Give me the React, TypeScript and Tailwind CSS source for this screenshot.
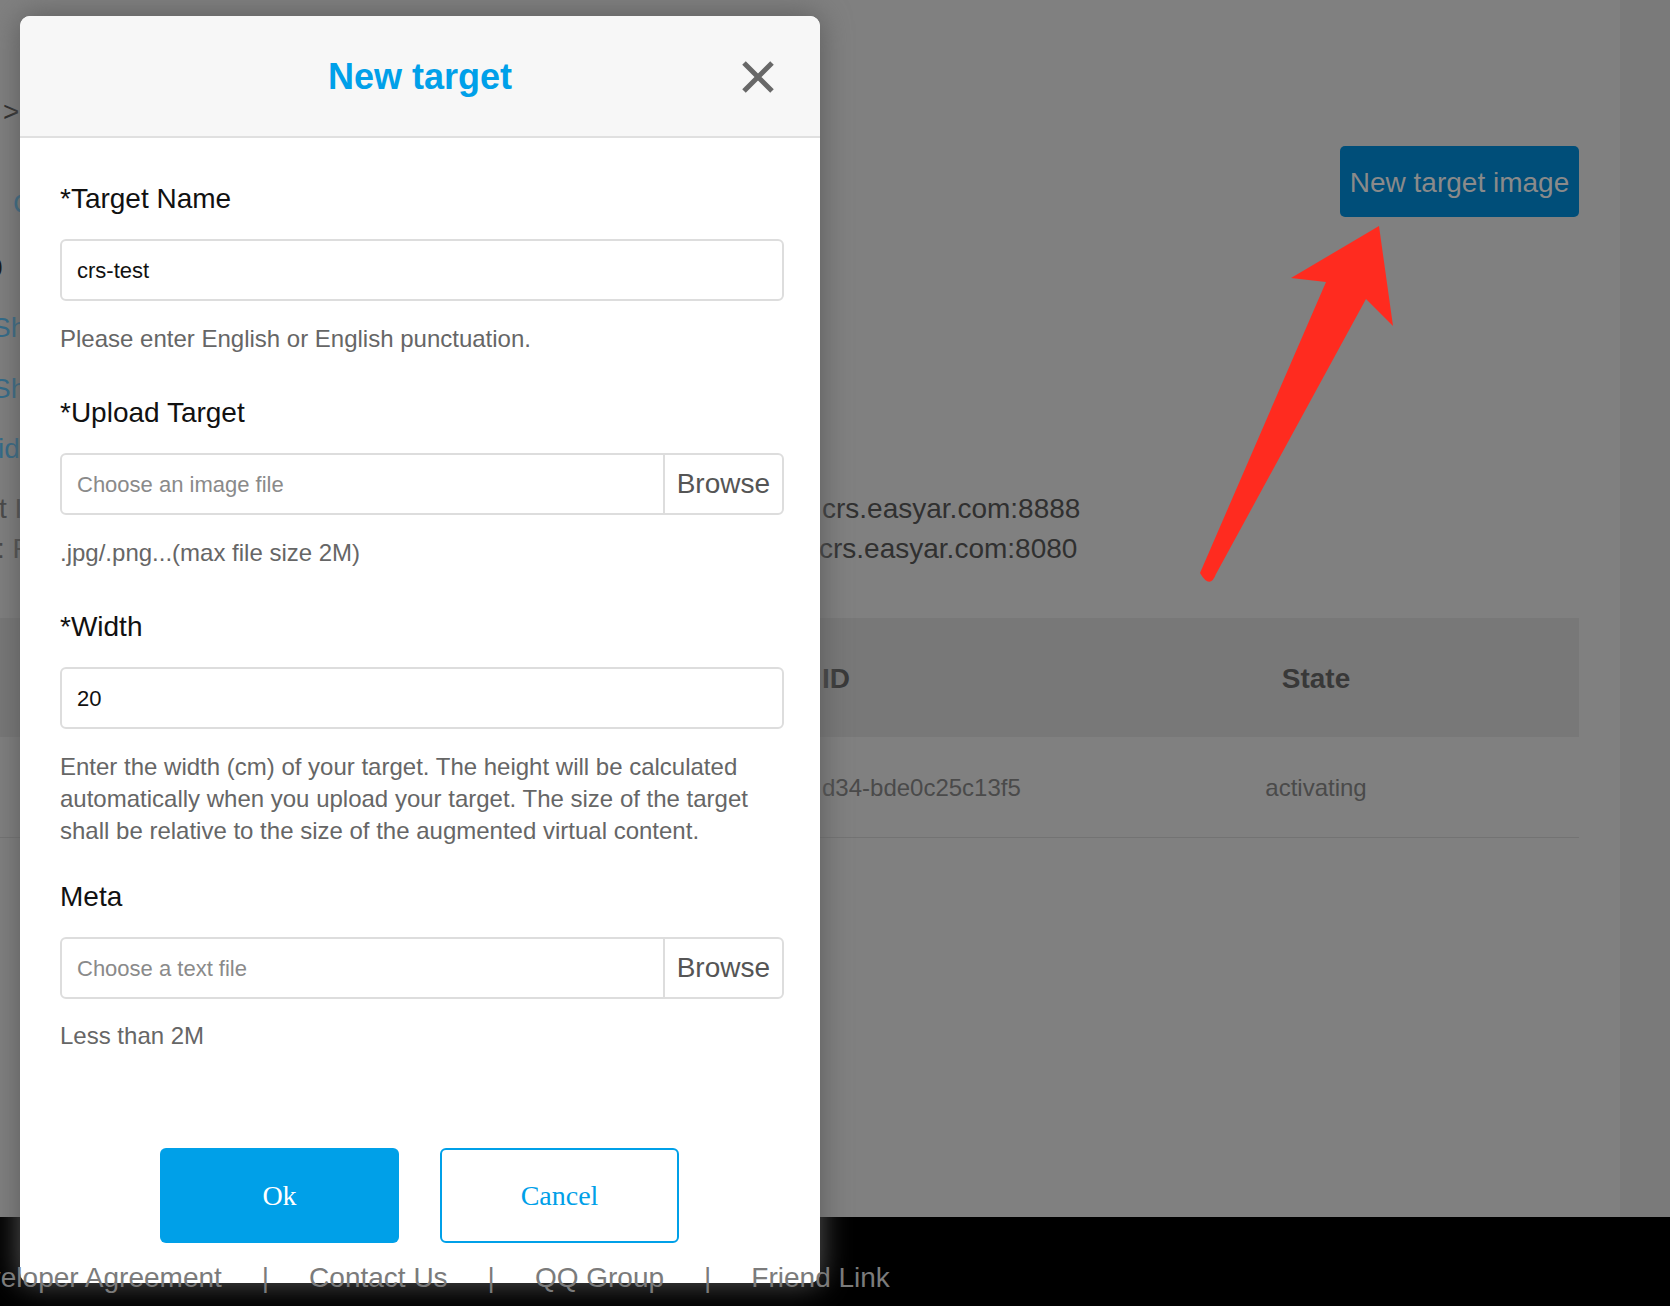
import React from "react";

const FileInput = ({ placeholder }: { placeholder: string }) => (
  <div className="mt-[20px] flex h-[62px] rounded-[6px] border-2 border-[#dddddd] bg-white">
    <div className="flex flex-1 items-center pl-[15px] text-[22px] text-[#8a8a8a]">
      {placeholder}
    </div>
    <div className="flex items-center border-l-2 border-[#dddddd] px-[12px] text-[28px] text-[#555555]">
      Browse
    </div>
  </div>
);

const TextInput = ({ value }: { value: string }) => (
  <div className="mt-[20px] flex h-[62px] items-center rounded-[6px] border-2 border-[#dddddd] bg-white pl-[15px] text-[22px] text-[#111111]">
    {value}
  </div>
);

const Label = ({ children, mt }: { children: React.ReactNode; mt: string }) => (
  <div className={`${mt} h-[40px] text-[28px] leading-[40px] text-[#111111]`}>{children}</div>
);

const Help = ({ children }: { children: React.ReactNode }) => (
  <div className="mt-[22px] text-[24px] leading-[32px] text-[#666666]">{children}</div>
);

export default function App() {
  return (
    <div className="relative h-[1306px] w-[1670px] overflow-hidden bg-[#808080] font-['Liberation_Sans',Arial,Helvetica,sans-serif]">
      {/* page behind the overlay */}
      <div className="flex h-[1217px]">
        <div className="flex w-[1620px] flex-col pr-[41px]">
          <div className="mt-[92px] h-[40px] pl-[3px] text-[28px] leading-[40px] text-[#262626]">&gt;</div>

          <div className="flex">
            <div className="flex w-[822px] flex-col whitespace-nowrap text-[28px] leading-[36px]">
              <div className="mt-[54px] pl-[13px] text-[#2d6b8c]">Cloud</div>
              <div className="mt-[28px] -ml-[13px] text-[#141414]">0</div>
              <div className="mt-[24px] -ml-[8px] text-[#2d6b8c]">Show</div>
              <div className="mt-[25px] -ml-[8px] text-[#2d6b8c]">Show</div>
              <div className="mt-[24px] -ml-[2px] text-[#2d6b8c]">id</div>
              <div className="mt-[24px] -ml-[1px] text-[#474747]">t ID</div>
              <div className="mt-[4px] -ml-[3px] text-[#474747]">: Port</div>
            </div>
            <div className="flex flex-1 flex-col whitespace-nowrap text-[28px] leading-[36px] text-[#303030]">
              <div className="mt-[14px] flex h-[71px] w-[239px] items-center justify-center self-end rounded-[5px] bg-[#004e79] pt-[2px] text-[#8a8a8a]">
                New target image
              </div>
              <div className="mt-[274px]">crs.easyar.com:8888</div>
              <div className="mt-[4px] -ml-[3px]">crs.easyar.com:8080</div>
            </div>
          </div>

          <div className="mt-[51px]">
            <div className="grid h-[119px] grid-cols-[822px_231px_1fr] items-center bg-[#787878] pt-[2px] text-[28px] font-bold text-[#383838]">
              <div />
              <div>ID</div>
              <div className="text-center">State</div>
            </div>
            <div className="grid h-[101px] grid-cols-[822px_231px_1fr] items-center border-b border-[#737373] pt-[2px] text-[24px] text-[#4a4a4a]">
              <div />
              <div className="whitespace-nowrap">d34-bde0c25c13f5</div>
              <div className="text-center">activating</div>
            </div>
          </div>
        </div>
        <div className="flex-1 bg-[#7a7a7a]" />
      </div>

      <div className="h-[89px] bg-black pt-[41px]">
        <div className="relative z-20 -ml-[49px] flex h-[40px] items-center whitespace-nowrap text-[28px] leading-[40px] text-[#7b7b7b]">
          <span>Developer Agreement</span>
          <span className="mx-[40px]">|</span>
          <span>Contact Us</span>
          <span className="mx-[40px]">|</span>
          <span>QQ Group</span>
          <span className="mx-[40px]">|</span>
          <span>Friend Link</span>
        </div>
      </div>

      {/* modal */}
      <div className="absolute left-[20px] top-[16px] z-10 w-[800px] overflow-hidden rounded-[10px] bg-white shadow-[0_0_30px_rgb(90,90,90)]">
        <div className="grid h-[122px] grid-cols-[1fr_auto_1fr] items-center border-b-2 border-[#e0e0e0] bg-[#f7f7f7] pt-[2px]">
          <div />
          <div className="text-[36px] font-bold text-[#00a0e9]">New target</div>
          <div className="flex justify-end pr-[45px]">
            <svg width="34" height="34" viewBox="0 0 34 34">
              <path d="M3 3 L31 31 M31 3 L3 31" stroke="#686868" strokeWidth="5" fill="none" />
            </svg>
          </div>
        </div>

        <div className="flex flex-col pb-[40px] pl-[40px] pr-[36px]">
          <Label mt="mt-[41px]">*Target Name</Label>
          <TextInput value="crs-test" />
          <Help>Please enter English or English punctuation.</Help>

          <Label mt="mt-[38px]">*Upload Target</Label>
          <FileInput placeholder="Choose an image file" />
          <Help>.jpg/.png...(max file size 2M)</Help>

          <Label mt="mt-[38px]">*Width</Label>
          <TextInput value="20" />
          <Help>
            Enter the width (cm) of your target. The height will be calculated automatically when you upload
            your target. The size of the target shall be relative to the size of the augmented virtual content.
          </Help>

          <Label mt="mt-[30px]">Meta</Label>
          <FileInput placeholder="Choose a text file" />
          <div className="mt-[21px] text-[24px] leading-[32px] text-[#666666]">Less than 2M</div>

          <div className="mt-[96px] flex gap-[41px] pl-[100px] font-['Liberation_Serif','Times_New_Roman',serif] text-[28px]">
            <div className="flex h-[95px] w-[239px] items-center justify-center rounded-[6px] bg-[#00a0e8] text-white">
              Ok
            </div>
            <div className="flex h-[95px] w-[239px] items-center justify-center rounded-[6px] border-2 border-[#00a0e8] bg-white text-[#00a0e8]">
              Cancel
            </div>
          </div>
        </div>
      </div>

      {/* red annotation arrow */}
      <svg className="pointer-events-none absolute inset-0 z-30" width="1670" height="1306" viewBox="0 0 1670 1306">
        <path
          d="M1379 226 L1393 326 L1366 299 L1216 574 Q1210 590 1200 573 L1326 282 L1291 278 Z"
          fill="#ff2b1f"
        />
      </svg>
    </div>
  );
}
